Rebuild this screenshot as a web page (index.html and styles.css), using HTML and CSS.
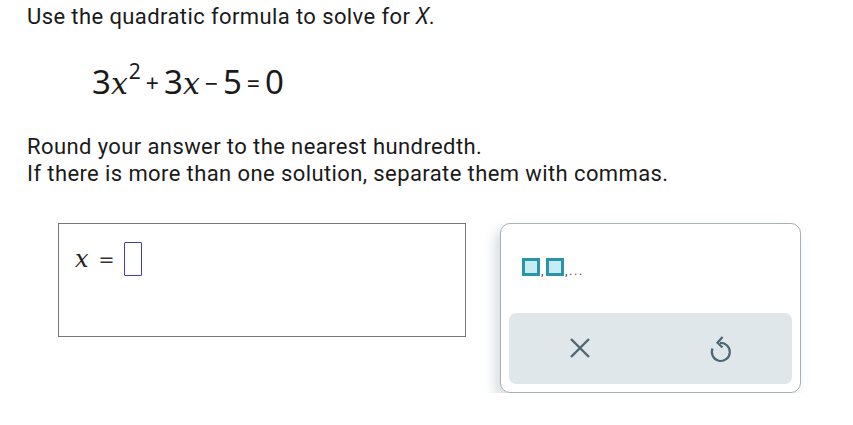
FILE: index.html
```html
<!DOCTYPE html>
<html>
<head>
<meta charset="utf-8">
<link rel="stylesheet" href="styles.css">
</head>
<body>
<div class="page">
  <p class="prompt">Use the quadratic formula to solve for <span class="var">x</span>.</p>
  <div class="equation"><span class="num">3</span><span class="var">x</span><sup class="num">2</sup><span class="op">+</span><span class="num">3</span><span class="var">x</span><span class="op">−</span><span class="num">5</span><span class="op">=</span><span class="num">0</span></div>
  <p class="instructions">Round your answer to the nearest hundredth.<br>If there is more than one solution, separate them with commas.</p>
  <div class="work">
    <div class="answer-box">
      <div class="answer-row"><span class="var">x</span><span class="eq">=</span><span class="slot"></span></div>
    </div>
    <div class="keypad">
      <div class="keys">
        <span class="tmpl"><span class="sq"></span><span class="comma">,</span><span class="sq"></span><span class="comma">,...</span></span>
      </div>
      <div class="actions">
        <button class="act" aria-label="clear">
          <svg width="22" height="22" viewBox="0 0 22 22"><path d="M2 2 L20 20 M20 2 L2 20" stroke="#4d6771" stroke-width="2.4" fill="none"/></svg>
        </button>
        <button class="act" aria-label="undo">
          <svg width="24" height="30" viewBox="0 0 24 30"><path d="M11 10 A9 9 0 1 1 3.5 15.5" stroke="#4d6771" stroke-width="2.2" fill="none"/><path d="M13.5 4 L8.5 9.7 L13.5 14.5" stroke="#4d6771" stroke-width="2.2" fill="none"/></svg>
        </button>
      </div>
    </div>
  </div>
</div>
</body>
</html>
```
FILE: styles.css
```css
* { box-sizing: border-box; }
html, body { margin: 0; padding: 0; background: #fff; }
body { font-family: Roboto, "Noto Sans", sans-serif; color: #1a1a1a; }
.page { padding: 2px 0 0 27px; }
.prompt { margin: 0; font-size: 22px; letter-spacing: 0.4px; line-height: 26px; }
.prompt .var { font-family: "Noto Sans", sans-serif; font-style: italic; font-size: 23px; text-transform: uppercase; }
.equation { margin: 34px 0 0 65px; font-family: "Noto Sans", sans-serif; font-size: 33px; line-height: 36px; height: 36px; white-space: nowrap; }
.equation .var { font-family: "DejaVu Serif", serif; font-style: italic; font-size: 30px; }
.equation sup { font-size: 21px; vertical-align: 0; position: relative; top: -15px; margin-left: 1px; }
.equation .op { font-size: 23px; margin: 0 5px; position: relative; top: -2px; }
.instructions { margin: 33px 0 0; font-size: 22px; letter-spacing: 0.4px; line-height: 27px; }
.work { display: flex; margin: 36px 0 0 31px; }
.answer-box { width: 408px; height: 114px; border: 1px solid #777; padding: 17px 0 0 16px; }
.answer-row { display: flex; align-items: center; height: 35px; }
.answer-row .var { font-family: "DejaVu Serif", serif; font-style: italic; font-size: 24px; color: #222; }
.answer-row .eq { font-family: "DejaVu Sans", sans-serif; font-size: 19px; margin: 0 10px 0 10px; color: #333; }
.slot { width: 18px; height: 34px; border: 1.5px solid #3c3cc7; border-radius: 1px; }
.keypad { margin-left: 34px; width: 301px; height: 170px; border: 1px solid #a5b1b5; border-radius: 10px; box-shadow: -5px 7px 12px rgba(110,130,140,0.28); padding: 34px 8px 8px 8px; display: flex; flex-direction: column; }
.keys { height: 55px; padding-left: 13px; }
.tmpl { display: flex; align-items: flex-end; }
.sq { width: 18px; height: 18px; border: 3px solid #2896a8; background: #c8ecf3; display: inline-block; }
.comma { font-size: 13px; color: #555; line-height: 10px; letter-spacing: 1.5px; margin: 0 1px; }
.actions { margin-top: 0; height: 72px; background: #e0e7ea; border-radius: 7px; display: flex; }
.act { flex: 1; border: 0; background: transparent; display: flex; align-items: center; justify-content: center; padding: 0; }
```
